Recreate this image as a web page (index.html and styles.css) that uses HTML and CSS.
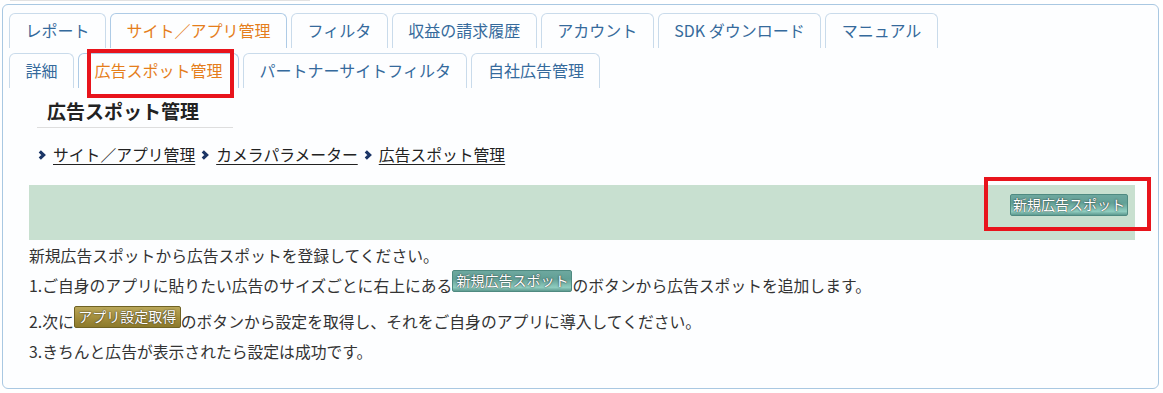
FILE: index.html
```html
<!DOCTYPE html>
<html lang="ja">
<head>
<meta charset="utf-8">
<title>広告スポット管理</title>
<link rel="stylesheet" href="styles.css">
</head>
<body>
<div class="topline"></div>
<div class="panel">
  <ul class="tabs">
    <li class="tab">レポート</li>
    <li class="tab active">サイト／アプリ管理</li>
    <li class="tab">フィルタ</li>
    <li class="tab">収益の請求履歴</li>
    <li class="tab">アカウント</li>
    <li class="tab">SDK ダウンロード</li>
    <li class="tab">マニュアル</li>
  </ul>
  <ul class="tabs sub">
    <li class="tab">詳細</li>
    <li class="tab active marked">広告スポット管理<span class="mark mark-tab"></span></li>
    <li class="tab">パートナーサイトフィルタ</li>
    <li class="tab">自社広告管理</li>
  </ul>
  <div class="content">
    <h2 class="title">広告スポット管理</h2>
    <nav class="crumbs">
      <svg class="chev" viewBox="0 0 8 10" width="8" height="10"><polyline points="1.8,1.4 5.6,5 1.8,8.6" /></svg>
      <a>サイト／アプリ管理</a>
      <svg class="chev" viewBox="0 0 8 10" width="8" height="10"><polyline points="1.8,1.4 5.6,5 1.8,8.6" /></svg>
      <a>カメラパラメーター</a>
      <svg class="chev" viewBox="0 0 8 10" width="8" height="10"><polyline points="1.8,1.4 5.6,5 1.8,8.6" /></svg>
      <a>広告スポット管理</a>
    </nav>
    <div class="toolbar">
      <span class="btn teal">新規広告スポット<span class="mark mark-btn"></span></span>
    </div>
    <div class="help">
      <p class="line">新規広告スポットから広告スポットを登録してください。</p>
      <p class="line tall">1.ご自身のアプリに貼りたい広告のサイズごとに右上にある<span class="btn teal inline">新規広告スポット</span>のボタンから広告スポットを追加します。</p>
      <p class="line tall l3">2.次に<span class="btn gold inline">アプリ設定取得</span>のボタンから設定を取得し、それをご自身のアプリに導入してください。</p>
      <p class="line l4">3.きちんと広告が表示されたら設定は成功です。</p>
    </div>
  </div>
</div>
</body>
</html>
```
FILE: styles.css
```css
html, body {
  margin: 0;
  padding: 0;
  background: #ffffff;
}
body {
  font-family: "Noto Sans CJK JP", "Noto Sans", sans-serif;
  color: #333333;
}
.topline {
  width: 300px;
  height: 1px;
  margin-left: 10px;
  background: #e2e2e2;
}
.panel {
  margin: 3px 0 0 2px;
  width: 1157px;
  height: 385px;
  border: 1px solid #a9c8e2;
  border-radius: 6px;
  background: #fdfeff;
  box-sizing: border-box;
  padding: 8px 0 0 6px;
}
.tabs {
  list-style: none;
  margin: 0;
  padding: 0;
  display: flex;
  gap: 4px;
}
.tabs.sub {
  margin-top: 5px;
}
.tab {
  position: relative;
  height: 35px;
  box-sizing: border-box;
  padding: 0 15.5px;
  border: 1px solid #c9dbeb;
  border-bottom: none;
  border-radius: 6px 6px 0 0;
  background: #fdfeff;
  font-size: 16px;
  line-height: 32px;
  color: #356a9c;
  white-space: nowrap;
}
.tab.active {
  color: #e57e1c;
  border-color: #aecbe6;
}
.mark {
  position: absolute;
  border: 4px solid #e8141c;
  box-sizing: border-box;
  pointer-events: none;
}
.mark-tab {
  left: 8px;
  top: -5px;
  width: 147px;
  height: 49px;
}
.title {
  margin: 10px 0 0 28px;
  width: 196px;
  box-sizing: border-box;
  padding: 0 0 4px 10px;
  font-size: 19px;
  line-height: 25px;
  font-weight: bold;
  color: #222222;
  border-bottom: 1px solid #dedede;
}
.crumbs {
  margin: 17px 0 0 29px;
  display: flex;
  align-items: center;
  font-size: 15.8px;
  line-height: 20px;
  color: #222222;
}
.crumbs a {
  text-decoration: underline;
  text-underline-offset: 3px;
  margin: 0 6px 0 7px;
}
.chev {
  flex: none;
}
.chev polyline {
  fill: none;
  stroke: #1b3566;
  stroke-width: 3.2;
  stroke-linejoin: miter;
}
.toolbar {
  margin: 20px 0 0 20px;
  width: 1106px;
  height: 55px;
  box-sizing: border-box;
  background: #c8e0d0;
  display: flex;
  justify-content: flex-end;
  align-items: flex-start;
  padding: 9px 7px 0 0;
}
.btn {
  display: inline-block;
  position: relative;
  height: 22px;
  box-sizing: border-box;
  padding: 0;
  border-radius: 2px;
  font-size: 14px;
  line-height: 19px;
  color: #ffffff;
  text-shadow: 0 0 1px #3a3a3a, 0 0 2px rgba(0, 0, 0, 0.5);
  white-space: nowrap;
  text-align: center;
}
.btn.teal {
  background: linear-gradient(#6ea89f, #62a096 40%, #8fcdbf 82%, #5e9a90);
  border: 1px solid #4f8a81;
  width: 118px;
}
.btn.teal.inline {
  width: 120px;
}
.btn.gold {
  background: linear-gradient(#b9a75a, #a48f3e 50%, #8c7a2c);
  border: 1px solid #6f6224;
  width: 107px;
}
.mark-btn {
  left: -27px;
  top: -18px;
  width: 167px;
  height: 54px;
}
.help {
  margin: 4px 0 0 20px;
}
.line {
  margin: 0;
  font-size: 15.8px;
  line-height: 24px;
  height: 24px;
  white-space: nowrap;
}
.line.tall {
  margin-top: 2px;
  line-height: 32px;
  height: 32px;
}
.line.l3 {
  margin-top: 4px;
}
.line.l4 {
  margin-top: 2px;
}
.btn.inline {
  vertical-align: top;
  margin-top: 0;
}
```
